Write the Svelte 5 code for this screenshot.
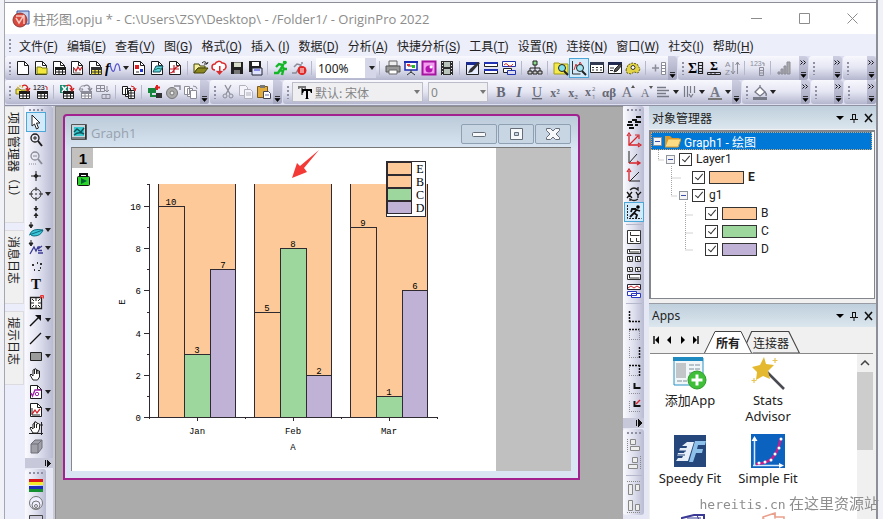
<script>
  const ink = '#1c1c1c';
  const dim = '#8b8c98';

  // 图标里反复用到的小部件
  const page = `<path d="M2.500 1.500h7l4 4v9h-11z" fill="#fff" stroke="${ink}"/><path d="M9.500 1.500v4h4" fill="none" stroke="${ink}"/>`;
  const grid = (c, bg = '#fff') =>
    `<path d="M4 7h11v8H4z" fill="${bg}"/><path d="M4.500 7.500h10v7h-10zM4 9.500h11M4 12h11M8 7v8M11.500 7v8" fill="none" stroke="${c}"/><path d="M4 7h11v2H4z" fill="${c}"/>`;
  const curve = (c) => `<path d="M7 2c4-2 6 0 6 4m-2-2l2 3 2-3" fill="none" stroke="${c}" stroke-width="1.300"/>`;
  const lens = (c, fill = 'none') =>
    `<circle cx="7" cy="6" r="4" fill="${fill}" stroke="${c}" stroke-width="1.300"/><path d="M10 9l4 5" stroke="${c}" stroke-width="2"/>`;
  const sheets = (c) =>
    `<path d="M1.500 2.500h5v8h-5zM4.500 4.500h5v8h-5z" fill="#fff" stroke="${c}"/><path d="M7.500 6.500h6v8h-6z" fill="#fff" stroke="${c}"/>`;
  const glyph = (t, size = 15, c = '#70727f', extra = '') =>
    `<text x="8" y="13" text-anchor="middle" font-family="Liberation Serif, serif" font-size="${size}" fill="${c}" ${extra}>${t}</text>`;
  const mini = (x, y, w, h) =>
    `<path d="M${x}.500 ${y}.500h${w}v${h}h-${w}z" fill="#fff" stroke="#333"/><path d="M${x + 2}.500 ${y + 1}v${h - 2}h${w - 3}" fill="none" stroke="#333"/>`;
  const frame = (on, all = 'lbtr') => {
    const sides = { l: 'M3.500 3v11', b: 'M3 13.500h11', t: 'M3 3.500h11', r: 'M13.500 3v11' };
    return all
      .split('')
      .map((k) => `<path d="${sides[k]}" stroke="${on.includes(k) ? '#111' : '#8f8f98'}" stroke-width="${on.includes(k) ? 1.5 : 1}" stroke-dasharray="${on.includes(k) ? '2 1' : '1 1'}"/>`)
      .join('');
  };

  const icons = {
    new: page,
    folder: page + '<path d="M4 7h4l1 1h5v6H4z" fill="#f3e73c" stroke="#777a10"/>',
    book: page + grid(ink),
    graph: page + '<path d="M4.500 7v6h7" stroke="#555" fill="none"/><path d="M5 8l2 3 2-4 2 3 2-3" stroke="#d3222a" fill="none" stroke-width="1.300"/>',
    matrix: page + grid('#333', '#f2e948'),
    fx: '<text x="0" y="13" font-family="Liberation Serif, serif" font-size="14" font-style="italic" font-weight="700">f</text><path d="M5 4c2 9 4 9 5 4s4-7 5 3" fill="none" stroke="#5553c9" stroke-width="1.200"/>',
    layout: page + '<path d="M4 5h4v4H4z" fill="#e02020"/><path d="M9 9h3v3H9z" fill="#2438d0"/><path d="M5 12h3" stroke="#333"/>',
    image: page + '<path d="M4 12l3-6h7l-3 6z" fill="#61d4d8" stroke="#0f4e58"/><path d="M6 10q3-3 6-1" stroke="#176" fill="none"/>',
    func: page + '<path d="M3 13c5 0 3-6 9-7M3 9h9M7 5v8" fill="none" stroke="#c4202a" stroke-width="1.200"/>',
    open: '<path d="M1 13V4h5l1 2h5v2H5z" fill="#f5ee9a" stroke="#45440a"/><path d="M1 13l4-5h10l-4 5z" fill="#8c8820" stroke="#45440a"/><path d="M9 3q3-3 5 1l1-2m-1 2h-3" fill="none" stroke="#222"/>',
    cloud: '<path d="M4 10a3 3 0 010-6 4 4 0 017-1 3.500 3.500 0 011 7" fill="#fff" stroke="#d92b2b" stroke-width="1.500"/><path d="M8 6v5H5l3.500 4 3.500-4H9.500V6z" fill="#d92b2b"/>',
    save: '<path d="M2 2h12v12H2z" fill="#222"/><path d="M5 2.500h7V7H5z" fill="#d8dccb"/><path d="M5 10h6v4H5z" fill="#777"/>',
    saveas: '<path d="M2 1h12v11H2z" fill="#222"/><path d="M5 2h7v4H5z" fill="#fff"/><path d="M5 8h10v7H5z" fill="#dfe4ff" stroke="#223"/><path d="M7 10h6" stroke="#33c"/>',
    run: '<path d="M10 2l3 1M3 7l3-3 4 1-3 5 3 1-1 4M7 10l-2 3H1M9 6l2 3h3" fill="none" stroke="#14b827" stroke-width="2.400"/><circle cx="12" cy="2.500" r="1.800" fill="#14b827"/>',
    stop: `<path d="M10 3l2 0M3 7l3-3 4 1-3 5M7 10l-2 3H1" fill="none" stroke="${dim}" stroke-width="1.500"/><circle cx="11" cy="10.500" r="4.500" fill="#e12626"/><path d="M10 8v5M12 8v5" stroke="#fff"/>`,
    print: '<path d="M4 1h8v5H4z" fill="#eee" stroke="#666"/><path d="M1 6h14v6H1z" fill="#999" stroke="#555"/><path d="M4 10h8v4H4z" fill="#fff" stroke="#666"/>',
    slide: '<path d="M2 2h12v8H2z" fill="#fff" stroke="#1c2bb0" stroke-width="1.500"/><path d="M1 2h14" stroke="#1c2bb0" stroke-width="2"/><path d="M5 6h5M8 10v3M4 15l4-3 4 3" stroke="#333" fill="none"/><path d="M4 4h3v2H4z" fill="#e33"/><path d="M9 5h3v3H9z" fill="#2b2"/>',
    video: '<path d="M1.500 1.500h13v13h-13z" fill="#f39cf0" stroke="#a515a0" stroke-width="2"/><circle cx="8" cy="9" r="3.500" fill="#b515b0"/><circle cx="10" cy="7" r="1.500" fill="#fff"/>',
    film: '<path d="M2 1h12v14H2z" fill="#2d2d2d"/><path d="M5 2h6v5H5zM5 9h6v5H5z" fill="#b9c4bd"/><path d="M3.500 2v13M12.500 2v13" stroke="#eee" stroke-dasharray="1 2"/>',
    script: '<path d="M1.500 2.500h12v12h-12z" fill="#e9efff" stroke="#222"/><path d="M1 2h13v3H1z" fill="#1d2c8f"/><path d="M3 13l4-1 8-9-2-1-8 7z" fill="#333"/>',
    split: '<path d="M1.500 2.500h13v4h-13zM1.500 9.500h13v4h-13z" fill="#fff" stroke="#222"/><path d="M1 2h14v2H1zM1 9h14v2H1z" fill="#2232b0"/>',
    strip: '<path d="M1.500 1.500h13v5h-13z" fill="#fff" stroke="#2232b0"/><path d="M3 5q2-3 4 0t5-1" stroke="#d22" fill="none"/><path d="M2.500 8.500h8v4h-8z" fill="#fff" stroke="#222"/><path d="M6.500 10.500h8v4h-8z" fill="#dde" stroke="#2232b0"/>',
    tree: '<path d="M8 5v3M3 11V8h10v3M8 8v3" fill="none" stroke="#222"/><path d="M6 1h4v4H6z" fill="#8d8" stroke="#222"/><path d="M1 11h4v3H1zM6 11h4v3H6zM11 11h4v3h-4z" fill="#ccc" stroke="#222"/>',
    find: '<path d="M1 3h5l1 1h8v10H1z" fill="#f5ea4b" stroke="#a09a18"/><circle cx="9" cy="8" r="3.500" fill="#7fe0ea" stroke="#222"/><path d="M11 11l4 4" stroke="#222" stroke-width="2"/>',
    zoomgraph: '<path d="M1.500 1v13h8" stroke="#333" fill="none"/><path d="M3 10l2-6 2 5 2-7 3 5" stroke="#d33" fill="none"/><circle cx="9" cy="8" r="3.500" fill="#9fe5f2" stroke="#222"/><path d="M11 11l4 4" stroke="#222" stroke-width="2"/>',
    table: '<path d="M1.500 2.500h13v10h-13z" fill="#fff" stroke="#222"/><path d="M1 2h14v3H1z" fill="#333b52"/><path d="M3 7.500h10M3 10h10" stroke="#333" stroke-dasharray="2 2"/>',
    edit: '<path d="M1.500 2.500h13v11h-13z" fill="#fff" stroke="#222"/><path d="M1 2h14v3H1z" fill="#222a50"/><path d="M3 8h4M3 10.500h3" stroke="#333"/><path d="M7 12l1-3 5-5 2 1-5 6z" fill="#555" stroke="#222"/>',
    gear: '<path d="M1 10l2-5 4-2 5 1 3 5-2 4-4-1-3 2-4-1z" fill="#e3d443" stroke="#665f14" stroke-dasharray="2 1"/><circle cx="8" cy="7.500" r="2" fill="#fff" stroke="#333"/>',
    addcol: `<path d="M1 8h7M4.500 4.500v7" stroke="${dim}" stroke-width="1.500"/><path d="M10.500 2.500h4v12h-4zM10 5.500h5M10 8.500h5M10 11.500h5" fill="#fff" stroke="${dim}"/>`,
    stats: '<text x="0" y="13" font-family="Liberation Serif, serif" font-size="14" font-weight="700">Σ</text><path d="M10.500 2.500h4v11h-4zM10 5.500h5M10 8.500h5M10 11.500h5" fill="none" stroke="#222" stroke-width="1.200"/>',
    statsrow: '<text x="4" y="10" font-family="Liberation Serif, serif" font-size="12" font-weight="700">Σ</text><path d="M1.500 12.500h13v2h-13zM5 12v3M9 12v3" fill="none" stroke="#222"/>',
    sort: `<text x="1" y="7" font-family="Liberation Sans, sans-serif" font-size="8" fill="${dim}">A</text><text x="1" y="15" font-family="Liberation Sans, sans-serif" font-size="8" fill="${dim}">Z</text><path d="M9 2v12m-2-3l2 3 2-3M13.500 14V2m-2 3l2-3 2 3" fill="none" stroke="${dim}"/>`,
    setcol: `<text x="0" y="6" font-family="Liberation Sans, sans-serif" font-size="7" fill="${dim}">123</text><path d="M9.500 7.500h4v8h-4zM9 10.500h5M9 13h5" fill="none" stroke="${dim}"/><path d="M12 3h2v3" fill="none" stroke="${dim}"/>`,
    bars: `<path d="M2 12h2v2H2zM5 9h2v5H5zM8 6h2v8H8zM11 2h3v12h-3z" fill="#aaa" stroke="${dim}"/>`,
    import1: '<path d="M1 5h4l1 1h6v4H1z" fill="#f3e354" stroke="#867d16"/><path d="M2 3l2 1M5 1v2M8 2l-1 2" stroke="#d6a500"/>' + grid(ink) + curve('#d02222'),
    import2: '<text x="0" y="6" font-family="Liberation Sans, sans-serif" font-size="7">123</text>' + grid(ink) + '<path d="M12 2q3 0 2 4" fill="none" stroke="#d02222"/>',
    excel: '<path d="M1 1h8v8H1z" fill="#1d8b73"/><path d="M3 2l5 6M8 2L3 8" stroke="#fff" stroke-width="1.500"/>' + grid(ink) + curve('#d02222'),
    reimport: '<path d="M2 5h4l-2 3zM3 5q0-4 5-3" fill="none" stroke="#8b8c98"/>' + grid(dim) + curve(dim),
    copycol: `<path d="M1.500 1.500h8v6h-8zM1 4.500h9M5.500 1v7" fill="none" stroke="${dim}"/><path d="M12 2v6m-2-2l2 2 2-2M7 10.500h8v4H7zM11 10v5" fill="none" stroke="${dim}"/>`,
    batch: sheets(ink) + '<path d="M10 2q4 0 4 4m-2-2l2 3 1-3" fill="none" stroke="#d02222"/><path d="M7 9h7M7 12h7M10 7v8" stroke="#222"/>',
    connect: '<path d="M1 4h8v5H1z" fill="#15863c"/><path d="M9 9h6v5H9z" fill="#333"/><path d="M10 1v5M8 3.500h5" stroke="#e02020" stroke-width="2"/><path d="M4 9v3h5" stroke="#15863c" fill="none" stroke-width="2"/>',
    globe: `<circle cx="7" cy="9" r="5.500" fill="#aaa" stroke="#777"/><circle cx="7" cy="9" r="2" fill="#eee" stroke="#777"/><path d="M9 2h6v4" fill="none" stroke="${dim}" stroke-width="1.500"/>`,
    pages: sheets(dim) + `<path d="M10 2q4 0 4 3" fill="none" stroke="${dim}"/>`,
    cut: `<path d="M5 1l5 9M11 1L6 10" stroke="${dim}" stroke-width="1.300"/><circle cx="5" cy="12" r="2" fill="none" stroke="${dim}"/><circle cx="11" cy="12" r="2" fill="none" stroke="${dim}"/>`,
    copy: '<path d="M1.500 1.500h6l2 2v8h-8z" fill="#f4f4fa" stroke="#b0b1bd"/><path d="M6.500 5.500h6l2 2v7h-8z" fill="#f4f4fa" stroke="#b0b1bd"/><path d="M8 9h5M8 11h5" stroke="#b0b1bd"/>',
    paste: '<path d="M1.500 2.500h10v11h-10z" fill="#e2ac3d" stroke="#7b5a18"/><path d="M4 1h5v3H4z" fill="#777"/><path d="M7.500 7.500h5l2 2v5h-7z" fill="#fff" stroke="#445"/><path d="M9 11h4" stroke="#66a"/>',
    bold: glyph('B', 14, '#666874', 'font-weight="700"'),
    italic: glyph('I', 14, '#666874', 'font-weight="700" font-style="italic"'),
    underline: glyph('U', 14, '#666874', 'text-decoration="underline"'),
    sup: glyph('x²', 12, '#666874', 'font-weight="700"'),
    sub: glyph('x₂', 12, '#666874', 'font-weight="700"'),
    supsub: '<text x="2" y="12" font-family="Liberation Serif, serif" font-size="12" font-weight="700" fill="#666874">x</text><text x="9" y="7" font-size="6" fill="#70727f">2</text><text x="9" y="15" font-size="6" fill="#70727f">1</text>',
    greek: glyph('αβ', 13, '#666874', 'font-weight="700"'),
    bigger: glyph('A', 15) + '<path d="M12 4l2-3 2 3z" fill="#555"/>',
    smaller: glyph('A', 12) + '<path d="M12 2l2 3 2-3z" fill="#555"/>',
    align: '<path d="M2 3.500h9M2 6.500h12M2 9.500h9M2 12.500h12" stroke="#777a87" stroke-width="1.300"/>',
    vbars: '<path d="M3.500 2v11M6.500 2v11M9.500 2v7M13.500 2v7M8 10l2 3 2-3" stroke="#777a87" fill="none" stroke-width="1.200"/>',
    fontcolor: glyph('A', 14, '#777a87', 'font-weight="700"') + '<path d="M1 14h14v2H1z" fill="#777"/>',
    bucket: '<path d="M3 8l5-5 5 5-5 4zM8 3V1" fill="#fff" stroke="#777a87" stroke-width="1.300"/><path d="M13 8q2 2 1 4" stroke="#777a87" fill="none" stroke-width="1.500"/><path d="M1 13h14v3H1z" fill="#777a87"/>',
    // 左侧工具
    pointer: '<path d="M4 1l8 8H8.500l2 5-2 1-2-5L4 12z" fill="#fff" stroke="#222"/>',
    zoomin: lens(ink) + '<path d="M5 6h4M7 4v4" stroke="#222"/>',
    zoomout: lens(dim) + `<path d="M5 6h4" stroke="${dim}"/><path d="M1 14h8" stroke="${dim}" stroke-dasharray="1 1"/>`,
    reader: '<path d="M8 3v10M3 8h10" stroke="#222"/><path d="M5.500 8L8 5.500 10.500 8 8 10.500z" fill="#222"/>',
    target: '<circle cx="8" cy="8" r="5" fill="none" stroke="#333"/><path d="M8 1v4M8 11v4M1 8h4M11 8h4M7 8h2" stroke="#222"/>',
    range: '<path d="M8 2v3M8 11v3" stroke="#222" stroke-width="1.500"/><path d="M5.500 4h5L8 7.500zM5.500 12h5L8 8.500z" fill="#222"/>',
    mask: '<path d="M3 0v4M1 3l2 3 2-3z" stroke="#222" fill="#222"/><path d="M2 12q2-6 13-4-2 6-9 6-3 0-4-2z" fill="#3cc6d8" stroke="#0b6b80"/><path d="M1 13l14-5" stroke="#0b6b80"/>',
    draw: '<path d="M3 0v4M1 3l2 3 2-3z" stroke="#222" fill="#222"/><path d="M2 14l4-7 2 4 2-4h2M10 9l4-3M10 10.500h4M10 13h5" fill="none" stroke="#3b3b96" stroke-width="1.300"/>',
    dots: '<path d="M4 6h2v2H4zM9 4h1v2H9zM12 5h2v2h-2zM6 11h1v2H6zM10 12h2v1h-2zM12 9h1v2h-1z" fill="#333"/>',
    text: glyph('T', 15, '#111', 'font-weight="700"'),
    note: '<path d="M2.500 3.500h11v11h-11z" fill="#fff" stroke="#222" stroke-width="1.300"/><path d="M8 4v3M8 11v3M3 9h3M10 9h3M6 7l-2-2M10 7l2-2M6 11l-2 2M10 11l2 2" stroke="#222"/><path d="M12.500 4.500V1.500h3v3M12.500 3h3" fill="none" stroke="#e33"/>',
    arrow: '<path d="M2 14L11 5" stroke="#111" stroke-width="1.500"/><path d="M7 3h6v6z" fill="#111"/>',
    line: '<path d="M2 14L13 3" stroke="#111" stroke-width="1.300"/>',
    rect: '<path d="M2.500 4.500h11v8h-11z" fill="#9b9b9b" stroke="#222"/>',
    hand: '<path d="M5 14L2 9l1-1 2 2V4q1-1 1.500 0V3q1-1 1.500 0v1q1-1 1.500 0v1q1-1 2 0v6l-2 3z" fill="#fff" stroke="#222"/><path d="M6.500 4v4M8.500 4v4M10 5v3" stroke="#222"/>',
    formula: page + '<path d="M3 9l1.500 3L7 6h6" fill="none" stroke="#a028a8" stroke-width="1.400"/><circle cx="9" cy="10" r="1.700" fill="none" stroke="#a028a8"/>',
    chart: page + '<path d="M4 6v7h8" stroke="#222" fill="none"/><path d="M4 12l3-4 2 3 3-4" stroke="#d3222a" fill="none" stroke-width="1.300"/>',
    handline: '<path d="M5 13L2 8l1-1 2 2V4q1-1 1.500 0V2q1-1 1.500 0v1q1-1 1.500 0v1q1-1 2 0v5l-2 4z" fill="#fff" stroke="#222"/><path d="M6.500 4v4M8.500 4v4M1 13.500h14M13.500 2v13M11 5h4" stroke="#222"/>',
    cube: '<path d="M3 6l4-4h7v8l-4 5H3z" fill="#9fa0a8" stroke="#6e6f78"/><path d="M3 6h7v9M10 6l4-4" fill="none" stroke="#6e6f78"/>',
    palette: '<path d="M1 2h14v3H1z" fill="#d81818"/><path d="M1 5h14v3H1z" fill="#f4ea28"/><path d="M1 9h14v3H1z" fill="#1a2cb8"/><path d="M1 12h14v3H1z" fill="#159030"/>',
    rings: '<circle cx="8" cy="8" r="6.500" fill="#eef" stroke="#777"/><circle cx="8" cy="10" r="4" fill="none" stroke="#777"/><circle cx="8" cy="11" r="1.500" fill="none" stroke="#777"/>',
    box: '<path d="M1.500 2.500h13v12h-13z" fill="#ccd" stroke="#444"/>',
    // 右侧工具
    waves: '<path d="M10 3h5M6 6h5M9 8h6M2 8h4M1 11h6M9 11h3M3 14h5" stroke="#111" stroke-width="2"/>',
    axesxy: '<path d="M3 3v10h10" fill="none" stroke="#d8232a" stroke-width="1.300"/><path d="M3 13l9-9M1 4l2-3 2 3M12 11l3 2-3 2M9 3h4v4" fill="none" stroke="#d8232a" stroke-width="1.200"/>',
    axesx: '<path d="M3 1v12M3 13l8-9" stroke="#222"/><path d="M3 13h10m-2-2l3 2-3 2" fill="none" stroke="#d8232a" stroke-width="1.300"/>',
    axesy: '<path d="M3 13h11M4 13l9-9" stroke="#222"/><path d="M3 13V3M1 4l2-3 2 3" fill="none" stroke="#d8232a" stroke-width="1.300"/>',
    swap: '<path d="M1 6l5 6M6 6l-5 6M10 6l2 3 3-3M12 9v3" fill="none" stroke="#111" stroke-width="1.300"/><path d="M4 4q4-4 8 0V1M12 13q-4 3-8 0v2" fill="none" stroke="#222" stroke-width="1.300"/>',
    jog: '<path d="M1.500 1v13.500h14" fill="none" stroke="#222" stroke-dasharray="2 1"/><circle cx="12" cy="3" r="1.800"/><path d="M11 5l-3 4 3 2-1 3M8 9l-4 4M10 5H6L5 8M11 6l3 1" stroke="#111" stroke-width="1.800" fill="none"/>',
    lay1: '<path d="M1.500 1.500h13v13h-13z" fill="#fff" stroke="#333"/><path d="M4.500 3v3.500h9M4.500 9v3.500h3M10.500 9v3.500h3" fill="none" stroke="#333"/>',
    lay2: mini(1, 2, 13, 4) + mini(1, 9, 5, 5) + mini(9, 9, 5, 5),
    lay3: mini(1, 2, 5, 4) + mini(9, 2, 5, 4) + mini(1, 9, 13, 5),
    lay4: '<path d="M1.500 1.500h13v5h-13z" fill="#fff" stroke="#223"/><path d="M2 5l3-2 3 2 3-2 3 2" stroke="#d8232a" fill="none"/><path d="M1.500 8.500h9v4h-9zM5.500 10.500h9v4h-9z" fill="#fff" stroke="#2a35c0"/>',
    frlb: frame('lb', 'lb'),
    frt: frame('t'),
    frr: frame('r', 'lbr'),
    frall: frame('tr'),
    frin: frame('', 'lb') + '<path d="M8.500 3v5h6" fill="none" stroke="#111" stroke-width="2"/>',
    frred: frame('', 'lb') + '<path d="M8.500 3v5h6" fill="none" stroke="#111" stroke-width="2"/><path d="M10 6l4-4" stroke="#d8232a" stroke-width="1.500"/>',
    al1: '<path d="M1.500 2v13" stroke="#888" stroke-dasharray="1 1"/><path d="M4.500 2.500h5v5h-5zM4.500 9.500h9v4h-9z" fill="#eee" stroke="#888"/>',
    al2: '<path d="M14.500 1v13" stroke="#888" stroke-dasharray="1 1"/><path d="M6.500 2.500h5v5h-5zM2.500 9.500h9v4h-9z" fill="#eee" stroke="#888"/>',
    al3: '<path d="M1 1.500h14" stroke="#888" stroke-dasharray="1 1"/><path d="M2.500 4.500h4v10h-4zM9.500 4.500h4v6h-4z" fill="#eee" stroke="#888"/>',
    al4: '<path d="M1 14.500h14" stroke="#888" stroke-dasharray="1 1"/><path d="M2.500 2.500h4v10h-4zM9.500 6.500h4v6h-4z" fill="#eee" stroke="#888"/>',
  };

  const menus = [
    ['文件', 'F'], ['编辑', 'E'], ['查看', 'V'], ['图', 'G'], ['格式', 'O'], ['插入 ', 'I'], ['数据', 'D'], ['分析', 'A'],
    ['快捷分析', 'S'], ['工具', 'T'], ['设置', 'R'], ['连接', 'N'], ['窗口', 'W'], ['社交', 'I'], ['帮助', 'H'],
  ];

  // "|" 分隔线，">" 下拉箭头，"*" 选中
  const bar = {
    standard: 'new folder book graph matrix fx > layout image func | open cloud save saveas | run stop |'.split(' '),
    standard2: '| print slide video film | script split strip | tree | find zoomgraph* table edit gear | addcol'.split(' '),
    column: 'stats statsrow sort | setcol | bars'.split(' '),
    import: 'import1 import2 | excel reimport copycol | batch | connect globe pages'.split(' '),
    edit: 'cut copy paste'.split(' '),
    format: 'bold italic underline sup sub supsub greek bigger smaller align > vbars > fontcolor >'.split(' '),
    style: 'bucket >'.split(' '),
    tools: 'pointer* zoomin zoomout reader target> range mask> draw> dots text note arrow> line> rect> hand formula> chart> handline cube'.split(' '),
    tools2: 'palette rings box'.split(' '),
    graph: 'waves axesxy axesx axesy swap jog* | lay1 lay2 lay3 lay4 | frlb frt frr frall frin frred'.split(' '),
    graph2: 'al1 al2 | al3 al4'.split(' '),
  };

  const colors = { E: '#fdc998', B: '#fdc998', C: '#9dd79d', D: '#c0b2d6' };

  // 柱形图数据
  const months = [
    { name: 'Jan', B: 10, C: 3, D: 7 },
    { name: 'Feb', B: 5, C: 8, D: 2 },
    { name: 'Mar', B: 9, C: 1, D: 6 },
  ];
  const base = 269;
  const top = 36;
  const step = 96;
  const barW = 26;
  const y = (v) => Math.round(base - v * 21.1);

  let rows = $state([
    { level: 1, label: 'Layer1', open: true, on: true },
    { level: 2, label: 'E', color: colors.E, bold: true, on: true },
    { level: 2, label: 'g1', open: true, on: true },
    { level: 3, label: 'B', color: colors.B, on: true },
    { level: 3, label: 'C', color: colors.C, on: true },
    { level: 3, label: 'D', color: colors.D, on: true },
  ]);
</script>

{#snippet items(list)}
  {#each list as item}
    {#if item === '|'}
      <span class="sep"></span>
    {:else if item === '>'}
      <span class="drop"></span>
    {:else}
      {@const name = item.replace(/[*>]/g, '')}
      <button class="tool" class:active={item.endsWith('*')} class:more={item.endsWith('>')} aria-label={name}>
        <svg viewBox="0 0 16 16" width="16" height="16">{@html icons[name]}</svg>
      </button>
    {/if}
  {/each}
{/snippet}

{#snippet cap(more)}
  <span class="cap">
    {#if more}<svg width="7" height="5"><path d="M0.500 0.500l2 2-2 2M3.500 0.500l2 2-2 2" fill="none" stroke="#111" /></svg>{/if}
    <svg width="7" height="6"><path d="M1 0.500h5M1 2.500h5L3.500 5.500z" stroke="#111" stroke-width="0.800" /></svg>
  </span>
{/snippet}

{#snippet panelHead(title)}
  <header class="panel-head">
    <h2>{title}</h2>
    <button aria-label="menu"><svg width="10" height="10"><path d="M1 3h8L5 7z" /></svg></button>
    <button aria-label="pin"><svg width="10" height="10"><path d="M3.500 1v5M3 1.500h4M6.500 1v5M1 6.500h8M5 7v3" fill="none" stroke="#111" /></svg></button>
    <button aria-label="close"><svg width="10" height="10"><path d="M2 1l7 8M9 1L2 9" stroke="#111" stroke-width="1.600" /></svg></button>
  </header>
{/snippet}

<div class="window">
  <header class="title">
    <svg width="18" height="18" viewBox="0 0 18 18">
      <path d="M5 1h12v13H5z" fill="#c3d3ee" stroke="#3957a5" />
      <circle cx="8" cy="10" r="7" fill="#d8483c" stroke="#8e3a3a" />
      <path d="M4 8l3 5 5-8M4 6h8v8" fill="none" stroke="#f7c9c0" stroke-width="1.500" />
    </svg>
    <h1>柱形图.opju * - C:\Users\ZSY\Desktop\ - /Folder1/ - OriginPro 2022</h1>
    <button aria-label="minimize"><svg width="11" height="11"><path d="M0 5.500h11" /></svg></button>
    <button aria-label="maximize"><svg width="11" height="11"><path d="M0.500 0.500h10v10h-10z" /></svg></button>
    <button aria-label="close"><svg width="11" height="11"><path d="M0.500 0.500l10 10M10.500 0.500l-10 10" /></svg></button>
  </header>

  <nav class="menu">
    <span class="grip"></span>
    {#each menus as [label, key]}
      <button>{label}(<u>{key}</u>)</button>
    {/each}
  </nav>

  <div class="bars">
    <div class="bar">
      <div class="group">
        <span class="grip"></span>
        {@render items(bar.standard)}
        <div class="combo zoom">
          <select aria-label="缩放"><option>100%</option></select>
          <span class="drop"></span>
        </div>
        {@render items(bar.standard2)}
        {@render cap(false)}
      </div>
      <div class="group columns"><span class="grip"></span>{@render items(bar.column)}{@render cap(true)}</div>
      <div class="group rest"><span class="grip"></span>{@render cap(true)}</div>
      <div class="group rest"><span class="grip"></span>{@render cap(true)}</div>
    </div>
    <div class="bar">
      <div class="group"><span class="grip"></span>{@render items(bar.import)}{@render cap(false)}</div>
      <div class="group"><span class="grip"></span>{@render items(bar.edit)}{@render cap(false)}</div>
      <div class="group">
        <span class="grip"></span>
        <div class="combo font">
          <svg width="16" height="16" viewBox="0 0 16 16">
            <path d="M1 2h8v3H8L7 4H6v7H4V4H3L2 5H1z" fill="#777" />
            <path d="M5 5h10v4h-1l-1-2h-2v7l1 1H8l1-1V7H7L6 9H5z" />
          </svg>
          <select aria-label="字体"><option>默认: 宋体</option></select>
          <span class="drop"></span>
        </div>
        <div class="combo size">
          <select aria-label="字号"><option>0</option></select>
          <span class="drop"></span>
        </div>
        {@render items(bar.format)}
        {@render cap(false)}
      </div>
      <div class="group fill"><span class="grip"></span>{@render items(bar.style)}{@render cap(true)}</div>
      <div class="group rest"><span class="grip"></span>{@render cap(true)}</div>
      <div class="group rest"><span class="grip"></span>{@render cap(true)}</div>
    </div>
  </div>

  <div class="main">
    <div class="docks">
      <button>项目管理器（1）</button>
      <button>消息日志</button>
      <button>提示日志</button>
    </div>

    <div class="side left">
      <div class="vgroup wide"><span class="vgrip"></span>{@render items(bar.tools)}<span class="vcap"></span></div>
      <div class="vgroup last"><span class="vgrip"></span>{@render items(bar.tools2)}</div>
    </div>

    <main class="desktop">
      <section class="child">
        <header>
          <svg width="16" height="16" viewBox="0 0 16 16">
            <path d="M0.500 0.500h15v15H0.500z" fill="#c8d4dc" stroke="#555" />
            <path d="M3 3h10v9H3z" fill="#35c9cf" />
            <path d="M3 8l3-3 4 3 3-4M3 11q5-4 10-1" fill="none" stroke="#11555c" stroke-width="1.500" />
            <path d="M1 14h14M14.500 1v14" stroke="#333" />
          </svg>
          <h2>Graph1</h2>
          <button aria-label="minimize"><svg width="16" height="14"><rect x="1.500" y="5.500" width="13" height="4" rx="1" /></svg></button>
          <button aria-label="maximize"><svg width="16" height="14"><path d="M2.500 1.500h12v11h-12zM6.500 5.500h4v3h-4z" fill-rule="evenodd" /></svg></button>
          <button aria-label="close"><svg width="16" height="14"><path d="M1.500 1.500h4L8 4l2.500-2.500h4v2L11 7l3.500 3.500v2h-4L8 10l-2.500 2.500h-4v-2L5 7 1.500 3.500z" /></svg></button>
        </header>
        <div class="canvas">
          <svg class="chart" width="424" height="323" viewBox="0 0 424 323">
            <rect width="21" height="20" fill="#c3c0c0" />
            <text x="11" y="16" class="layer">1</text>
            <path d="M8 29v-3h7v3" fill="none" stroke="#111" stroke-width="2" />
            <rect x="5.500" y="28.500" width="12" height="9" rx="1" fill="#2bd32b" stroke="#111" />
            <path d="M9 30v6l6-3z" fill="#063" />

            {#each months as m, i}
              {@const x = 86 + i * step}
              <rect {x} y={top} width={barW * 3 - 1} height={base - top} fill={colors.E} />
              <path d="M{x}.500 {top}V{base}M{x + barW * 3 - 1}.500 {top}V{base}" class="ln" />
              {#each ['B', 'C', 'D'] as s, j}
                <rect x={x + j * barW + 0.5} y={y(m[s]) + 0.5} width={j === 2 ? barW - 1 : barW} height={base - y(m[s])} fill={colors[s]} class="ln" />
                <text x={x + j * barW + 13} y={y(m[s]) - 1} class="val">{m[s]}</text>
              {/each}
              <path d="M{x + 39}.500 {base}v4M{x + 87}.500 {base}v2" class="ln" />
              <text x={x + 39} y={base + 17} class="cat">{m.name}</text>
            {/each}

            <path d="M77.500 {top}V{base + 2}M77 {base}.500H366" class="ln" />
            <path d="M75 {top}.500h2" class="ln" />
            {#each [0, 2, 4, 6, 8, 10] as v}
              <path d="M72 {y(v)}.500h5" class="ln" />
              {#if v < 10}<path d="M75 {y(v + 1)}.500h2" class="ln" />{/if}
              <text x="69" y={y(v) + 4} class="num">{v}</text>
            {/each}
            <text x="221" y="302" class="cat">A</text>
            <text transform="translate(53 154) rotate(-90)" class="cat">E</text>

            <rect x="314.500" y="13.500" width="39" height="55" fill="#fff" class="ln" />
            {#each ['E', 'B', 'C', 'D'] as s, i}
              <rect x="315.500" y={14.5 + i * 13} width="24" height="12" fill={colors[s]} class="ln" />
              <text x="348" y={25 + i * 13} class="leg">{s}</text>
            {/each}

            <path d="M220 30l5-15 3 3L247 2 232 20l3 4z" fill="#f43a36" />
          </svg>
        </div>
      </section>
    </main>

    <div class="side right">
      <div class="vgroup"><span class="vgrip"></span>{@render items(bar.graph)}<span class="vcap"></span></div>
      <div class="vgroup last"><span class="vgrip"></span>{@render items(bar.graph2)}</div>
    </div>

    <aside>
      <section class="objects">
        {@render panelHead('对象管理器')}
        <div class="tree">
          <svg class="guides" width="60" height="130"><path d="M7.500 14v14h6M20.500 34v30M20.500 46h9M20.500 64h6M34.500 70v48M34.500 83h8M34.500 101h8M34.500 118h8" /></svg>
          <div class="row head">
            <span class="slot"><i class="minus"></i></span>
            <svg width="16" height="14" viewBox="0 0 16 14">
              <path d="M0 2h5l2 2h7v9H0z" fill="#d99a2b" />
              <path d="M3 5h13l-3 8H0z" fill="#fbdc85" stroke="#d99a2b" />
            </svg>
            <span>Graph1 - 绘图</span>
          </div>
          {#each rows as row}
            <label class="row l{row.level}">
              <span class="slot">{#if row.open}<i class="minus"></i>{/if}</span>
              <input type="checkbox" bind:checked={row.on} />
              {#if row.color}<span class="swatch" style="background: {row.color}"></span>{/if}
              <span class:bold={row.bold}>{row.label}</span>
            </label>
          {/each}
        </div>
      </section>

      <section class="apps">
        {@render panelHead('Apps')}
        <div class="tabs">
          <svg class="nav" width="54" height="12" viewBox="0 0 54 12">
            <path d="M5 6l4-4v8zM17 6l4-4v8zM35 6l-4-4v8zM47 6l-4-4v8z" />
            <path d="M4 2v8M48 2v8" stroke="#111" stroke-width="1.500" />
          </svg>
          <button class="tab current">
            <svg viewBox="0 0 48 22" preserveAspectRatio="none"><path d="M0.500 22L11 0.500h26L47.500 22" fill="#fff" stroke="#444" /></svg>
            <span>所有</span>
          </button>
          <button class="tab">
            <svg viewBox="0 0 48 22" preserveAspectRatio="none"><path d="M0.500 12L5 0.500h33L47.500 22H6" fill="#f0f0f0" stroke="#444" /></svg>
            <span>连接器</span>
          </button>
        </div>
        <div class="gallery">
          <div class="list">
            <a href="#add">
              <svg width="34" height="34" viewBox="0 0 34 34">
                <path d="M1 2h29v27H1z" fill="#f1f6f8" stroke="#2a93c4" />
                <path d="M0 1h30v4H0z" fill="#1f8ac0" />
                <path d="M3 7h10v15H3z" fill="#c3c6c8" />
                <path d="M16 9h11M16 13h11M16 17h7M4 25h10" stroke="#b7c3c9" stroke-width="2" stroke-dasharray="5 1" />
                <circle cx="24" cy="24" r="9" fill="#3fbf38" stroke="#2e9c2a" />
                <path d="M24 18.500v11M18.500 24h11" stroke="#fff" stroke-width="3" />
              </svg>
              <span>添加App</span>
            </a>
            <a href="#stats">
              <svg width="34" height="34" viewBox="0 0 34 34">
                <path d="M16 16l17 17" stroke="#4a4a52" stroke-width="2.500" />
                <path d="M13 1l2 7 8 1-6 6 2 8-7-3-7 4 1-8-5-5 8-2z" fill="#e4b92f" />
                <path d="M24 2v5M21.500 4.500h5M3 22v5M0.500 24.500h5" stroke="#e8c455" stroke-width="1.200" />
              </svg>
              <span>Stats Advisor</span>
            </a>
            <a href="#speedy">
              <svg width="34" height="34" viewBox="0 0 34 34">
                <path d="M1 1h32v32H1z" fill="#25477c" />
                <path d="M14 8h7l-6 19H3l2-3h4l1-2H4l1-3h6l1-2H6l1-3h6l1-2H9z" fill="#e6eef7" />
                <path d="M22 7h11l-1 4h-7l-1 4h6l-1 4h-6l-3 9h-4z" fill="#8ec1ea" />
                <path d="M5 13h9M4 17h9M3 21h9" stroke="#25477c" />
              </svg>
              <span>Speedy Fit</span>
            </a>
            <a href="#simple">
              <svg width="34" height="34" viewBox="0 0 34 34">
                <path d="M0 0h34v34H0z" fill="#0c63bf" />
                <path d="M3.500 32V5M2 31.500h28" stroke="#d7ebff" stroke-width="1.500" />
                <path d="M0.500 7l3-5 3 5zM28 29l5 2.500-5 2.500z" fill="#fff" />
                <path d="M5 30c12-1 20-3 25-26" fill="none" stroke="#c41f8c" stroke-width="2.500" />
                <path d="M8 29h.01M14 28h.01M20 26h.01M24 20h.01M28 14h.01M30 5h.01" stroke="#fff" stroke-width="3" stroke-linecap="round" />
              </svg>
              <span>Simple Fit</span>
            </a>
            <a href="#more1" aria-label="app">
              <svg width="34" height="34" viewBox="0 0 34 34"><path d="M9 6l12-3h10v20H9z" fill="#fff" stroke="#3a3a96" stroke-width="2" /><path d="M14 6h14M24 3l3 8" stroke="#3a3a96" fill="none" /></svg>
            </a>
            <a href="#more2" aria-label="app">
              <svg width="34" height="34" viewBox="0 0 34 34"><path d="M12 5l12-4v4h9v20H12z" fill="#fff" stroke="#e9a08c" stroke-width="1.500" /><path d="M12 5l3 5M24 1v8" stroke="#e9a08c" fill="none" /></svg>
            </a>
          </div>
          <div class="scroll">
            <svg width="10" height="6"><path d="M1 5l4-4 4 4" fill="none" stroke="#444" stroke-width="1.500" /></svg>
            <span></span>
          </div>
        </div>
      </section>
    </aside>
  </div>
</div>
<div class="mark"><span>hereitis.cn</span> 在这里资源站</div>

<style>
  :global(body) {
    background: #f1f2f8;
    overflow: hidden;
    font-family: "Noto Sans", "Noto Sans CJK SC", sans-serif;
    font-size: 12px;
    color: #222;
  }

  button {
    border: 0;
    padding: 0;
    background: none;
    font: inherit;
    color: inherit;
  }

  h1, h2 {
    margin: 0;
    font-weight: 400;
  }

  svg {
    display: block;
    flex: none;
  }

  .window {
    display: flex;
    flex-direction: column;
    box-sizing: border-box;
    height: 100vh;
    padding-top: 2px;
    margin: 0 5px 0 4px;
    border-right: 2px solid #8d8f98;
    border-left: 1px solid #a5a6b0;
    overflow: hidden;
  }

  .title {
    display: flex;
    align-items: center;
    height: 31px;
    padding-left: 7px;
    background: #fff;
    border-top: 1px solid #8d8f98;
  }

  .title h1 {
    flex: 1;
    margin-left: 3px;
    font-family: "Open Sans", "Noto Sans CJK SC", sans-serif;
    font-size: 13px;
    color: #8c8c8c;
    white-space: nowrap;
  }

  .title button {
    width: 48px;
    display: flex;
    justify-content: center;
  }

  .title button svg {
    fill: none;
    stroke: #8c8c8c;
  }

  .menu {
    display: flex;
    align-items: center;
    height: 22px;
    background: #eceefa;
  }

  .menu button {
    margin: 0 4px 0 5px;
    font-family: Roboto, "Noto Sans CJK SC", sans-serif;
    white-space: pre;
  }

  .menu u {
    text-underline-offset: 1px;
  }

  .grip {
    flex: none;
    width: 2px;
    height: 13px;
    margin: 0 3px 0 4px;
    background: repeating-linear-gradient(#8f90a4 0 2px, transparent 2px 4px);
  }

  .bars {
    padding-bottom: 1px;
    background: #dcdef0;
    border-bottom: 1px solid #8e90a4;
  }

  .bar {
    display: flex;
    gap: 1px;
    height: 24px;
  }

  .group {
    display: flex;
    align-items: center;
    flex: none;
    border-radius: 3px;
    background: linear-gradient(#f8f8fe, #e4e5f2 50%, #b4b6ce);
  }

  .columns {
    width: 130px;
  }

  .fill {
    width: 68px;
  }

  .rest {
    flex: 1 1 0;
  }

  .tool {
    display: flex;
    align-items: center;
    justify-content: center;
    flex: none;
    width: 18px;
    height: 18px;
  }

  .tool.active {
    background: #d3eafb;
    outline: 1px solid #4ca6d8;
  }

  .sep {
    flex: none;
    width: 1px;
    height: 14px;
    margin: 0 4px 0 3px;
    background: #b5b7cb;
  }

  .drop {
    flex: none;
    width: 8px;
    height: 4px;
    background: #222;
    clip-path: polygon(1px 0, 7px 0, 4px 4px);
  }

  .cap {
    display: flex;
    flex-direction: column;
    align-items: center;
    justify-content: flex-end;
    gap: 7px;
    box-sizing: border-box;
    width: 9px;
    height: 24px;
    margin-left: auto;
    padding-bottom: 2px;
    border-radius: 0 3px 3px 0;
    background: linear-gradient(#cdcee1, #a3a5bd);
  }

  .combo {
    display: flex;
    align-items: center;
    box-sizing: border-box;
    height: 20px;
    background: #fff;
  }

  .combo select {
    flex: 1;
    min-width: 0;
    appearance: none;
    border: 0;
    padding: 0 2px;
    background: none;
    font: inherit;
    color: #222;
  }

  .zoom {
    width: 60px;
    background: linear-gradient(90deg, #fff 49px, #d5d7e8 49px);
  }

  .font,
  .size {
    margin-right: 5px;
    border: 1px solid #bcbdc8;
    background: #efeff2;
  }

  .font select,
  .size select {
    color: #858585;
  }

  .font .drop,
  .size .drop {
    background: #777;
  }

  .font {
    width: 131px;
    padding: 0 1px 0 4px;
    font-family: "Noto Sans CJK SC", sans-serif;
  }

  .size {
    width: 60px;
    margin-right: 4px;
  }

  .main {
    display: flex;
    flex: 1;
    min-height: 0;
    background: #e6e7f5;
  }

  .docks {
    display: flex;
    flex-direction: column;
    align-items: flex-start;
    gap: 7px;
    width: 20px;
    background: #ecedfb;
  }

  .docks button {
    writing-mode: vertical-rl;
    text-orientation: sideways;
    width: 19px;
    padding: 5px 0 19px;
    border: 1px solid #dcdce0;
    border-left: 0;
    background: #f0f0f0;
    font-family: "Noto Sans CJK SC", sans-serif;
    line-height: 17px;
    text-align: left;
  }

  .side {
    display: flex;
    flex-direction: column;
    flex: none;
    overflow: hidden;
  }

  .left {
    width: 28px;
    border-right: 2px solid #c9cad6;
  }

  .right {
    width: 22px;
    margin: 0 4px 0 0;
  }

  .vgroup {
    display: flex;
    flex-direction: column;
    align-items: flex-start;
    flex: none;
    box-sizing: border-box;
    width: 21px;
    padding-left: 1px;
    border-radius: 3px;
    background: linear-gradient(90deg, #fafaff, #dfe0ee 50%, #b9bbd2);
  }

  .vgroup.wide {
    width: 28px;
  }

  .vgroup .tool {
    position: relative;
    margin: 0 1px;
  }

  .more::after {
    content: "";
    position: absolute;
    left: 18px;
    top: 7px;
    width: 6px;
    height: 4px;
    background: #222;
    clip-path: polygon(0 0, 100% 0, 50% 100%);
  }

  .vgroup .sep {
    width: 16px;
    height: 1px;
    margin: 3px 2px;
  }

  .vgrip {
    flex: none;
    width: 14px;
    height: 2px;
    margin: 3px 3px 2px;
    background: repeating-linear-gradient(90deg, #8f90a4 0 2px, transparent 2px 4px);
  }

  .vcap {
    align-self: stretch;
    height: 10px;
    margin: 3px 0 0 -1px;
    background: linear-gradient(#111, #111) right 7px center / 1px 6px no-repeat, conic-gradient(from 225deg at 100% 50%, #111 90deg, transparent 0) right 2px center / 4px 8px no-repeat, #c7c8da;
  }

  .last {
    margin-top: 1px;
  }

  .desktop {
    flex: 1;
    min-width: 0;
    border: solid #8d8d8d;
    border-width: 1px 0 0 1px;
    background: #ababab;
    overflow: hidden;
  }

  .child {
    box-sizing: border-box;
    margin: 7px 43px 0 7px;
    padding: 0 7px 7px 6px;
    border: 2px solid #a2238f;
    border-radius: 4px 4px 0 0;
    background: linear-gradient(#bccbd9, #d9e5f3 34px);
  }

  .child header {
    display: flex;
    align-items: center;
    gap: 1px;
    height: 31px;
  }

  .child h2 {
    flex: 1;
    margin: 2px 0 0 3px;
    color: #97a2ad;
    font-family: "Open Sans", sans-serif;
    font-size: 13px;
  }

  .child header button {
    display: flex;
    align-items: center;
    justify-content: center;
    box-sizing: border-box;
    width: 36px;
    height: 20px;
    margin-top: 4px;
    border: 1px solid #8fa0b2;
    border-radius: 2px;
    background: #c8d6e4;
  }

  .child header button svg {
    fill: #f6f8fa;
    stroke: #656e78;
  }

  .canvas {
    border-top: 1px solid #777;
    border-left: 1px solid #888;
    background: #c0c0c0;
    overflow: hidden;
  }

  .chart {
    background: #fff;
    font-family: "Liberation Mono", monospace;
  }

  .ln {
    stroke: #2e2a30;
    stroke-width: 1;
  }

  path.ln {
    fill: none;
  }

  .layer {
    font-family: "Liberation Sans", sans-serif;
    font-size: 15px;
    font-weight: 700;
    text-anchor: middle;
  }

  .val,
  .cat {
    font-size: 9px;
    text-anchor: middle;
  }

  .num {
    font-size: 9px;
    text-anchor: end;
  }

  .leg {
    font-family: "Liberation Serif", serif;
    font-size: 12px;
    text-anchor: middle;
  }

  aside {
    display: flex;
    flex-direction: column;
    flex: none;
    width: 227px;
    min-height: 0;
    background: #f0f0f0;
  }

  .objects {
    height: 197px;
    display: flex;
    flex-direction: column;
    flex: none;
    border-bottom: 1px solid #9a9ca5;
  }

  .panel-head {
    display: flex;
    align-items: center;
    gap: 4px;
    height: 23px;
    padding: 0 3px;
    background: linear-gradient(#bfcfdc, #dbe6ee);
  }

  .panel-head h2 {
    flex: 1;
    font-size: 12px;
  }

  .tree {
    position: relative;
    flex: 1;
    margin: 1px 1px 4px 0;
    border: 2px solid #84868e;
    border-width: 2px 1px 1px 2px;
    background: #fff;
    font-family: Roboto, "Noto Sans CJK SC", sans-serif;
  }

  .guides {
    position: absolute;
    left: 0;
    top: 0;
    fill: none;
    stroke: #a5a5a5;
    stroke-dasharray: 1 1;
  }

  .row {
    position: relative;
    display: flex;
    align-items: center;
    gap: 4px;
    height: 18px;
    padding-left: 2px;
  }

  .l1 {
    padding-left: 15px;
  }

  .l2 {
    padding-left: 28px;
  }

  .l3 {
    padding-left: 41px;
  }

  .row.head {
    gap: 3px;
    margin-right: 2px;
    outline: 1px dotted #d6a466;
    outline-offset: -1px;
    background: #0078d7;
    color: #fff;
  }

  .slot {
    width: 9px;
  }

  .minus {
    display: block;
    box-sizing: border-box;
    width: 9px;
    height: 9px;
    border: 1px solid #8f959c;
    background: linear-gradient(#3b4fa8, #3b4fa8) center / 5px 1px no-repeat, #f5f5f5;
  }

  .row input {
    appearance: none;
    position: relative;
    box-sizing: border-box;
    width: 13px;
    height: 13px;
    margin: 0;
    border: 1px solid #333;
    background: #fff;
  }

  .row input:checked::after {
    content: "";
    position: absolute;
    left: 4px;
    top: 0;
    width: 3px;
    height: 7px;
    border: solid #333;
    border-width: 0 1px 1px 0;
    transform: rotate(40deg);
  }

  .swatch {
    box-sizing: border-box;
    width: 35px;
    height: 13px;
    border: 1px solid #333;
  }

  .bold {
    font-weight: 700;
  }

  .apps {
    display: flex;
    flex-direction: column;
    flex: 1;
    min-height: 0;
  }

  .tabs {
    display: flex;
    align-items: flex-end;
    height: 26px;
    margin: 0 3px 0 1px;
    border-bottom: 1px solid #888;
  }

  .nav {
    align-self: center;
  }

  .tab {
    position: relative;
    width: 48px;
    height: 22px;
    font-family: "Noto Sans CJK SC", sans-serif;
  }

  .tab svg {
    position: absolute;
    inset: 0;
    width: 100%;
    height: 100%;
  }

  .tab span {
    position: relative;
  }

  .tab.current {
    z-index: 1;
    margin-right: -6px;
    font-weight: 700;
  }

  .tab:not(.current) {
    width: 54px;
  }

  .tab:not(.current) span {
    margin-right: 4px;
  }

  .gallery {
    display: flex;
    flex: 1;
    min-height: 0;
    margin: 0 3px 0 1px;
    background: #fff;
  }

  .list {
    display: grid;
    grid-template-columns: repeat(2, 78px);
    grid-auto-rows: 78px;
    align-content: start;
    flex: 1;
    padding-left: 1px;
    overflow: hidden;
  }

  .list a {
    display: flex;
    flex-direction: column;
    align-items: center;
    gap: 2px;
    padding: 2px 6px 0;
    color: #222;
    font-size: 13px;
    line-height: 16px;
    text-align: center;
    text-decoration: none;
  }

  .scroll {
    display: flex;
    flex-direction: column;
    align-items: center;
    width: 16px;
    padding-top: 6px;
    background: #f0f0f0;
  }

  .scroll span {
    width: 16px;
    height: 78px;
    margin-top: 6px;
    background: #cdcdcd;
  }

  .mark {
    position: fixed;
    right: 4px;
    bottom: 4px;
    color: #8e8e8e;
    font-family: "Noto Sans CJK SC", sans-serif;
    font-size: 15px;
    line-height: 20px;
  }

  .mark span {
    font-family: "DejaVu Sans Mono", monospace;
    font-size: 13px;
  }
</style>
